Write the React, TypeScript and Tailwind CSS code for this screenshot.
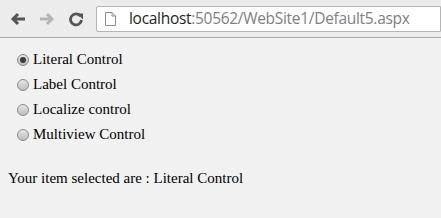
import React, { useState } from "react";

const items = ["Literal Control", "Label Control", "Localize control", "Multiview Control"];

function Radio({ checked }: { checked: boolean }) {
  return (
    <span className="w-[12px] h-[12px] rounded-full border border-[#8a8a8a] bg-gradient-to-b from-[#e6e6e6] to-[#bdbdbd] flex items-center justify-center shrink-0">
      {checked && <span className="w-[6px] h-[6px] rounded-full bg-[#3c3c3c]" />}
    </span>
  );
}

export default function App() {
  const [selected, setSelected] = useState(0);

  return (
    <div className="w-[441px] h-[218px] bg-[#f1f1f1] overflow-hidden">
      {/* browser toolbar */}
      <div className="h-[38px] bg-[#ececec] border-b border-[#a9a9a9] flex items-center pl-[9px] pt-[1px]">
        <svg width="18" height="16" viewBox="0 0 18 16" className="shrink-0">
          <path d="M16 8H4M9 3L4 8l5 5" stroke="#555" strokeWidth="3" fill="none" strokeLinejoin="miter" />
        </svg>
        <svg width="18" height="16" viewBox="0 0 18 16" className="shrink-0 ml-[11px]">
          <path d="M2 8h12M9 3l5 5-5 5" stroke="#b4b4b4" strokeWidth="3" fill="none" />
        </svg>
        <svg width="16" height="16" viewBox="0 0 16 16" className="shrink-0 ml-[12px]">
          <path d="M12.5 5.2A5.5 5.5 0 1 0 13.5 9" stroke="#555" strokeWidth="2.8" fill="none" />
          <path d="M9 2.5h6v6z" fill="#555" />
        </svg>
        <div className="ml-[12px] h-[26px] flex-1 bg-white border border-[#b5b5b5] rounded-l-[2px] flex items-center pl-[8px]">
          <svg width="11" height="14" viewBox="0 0 11 14" className="shrink-0">
            <path d="M0.5 0.5h6.5l3.5 3.5v9.5h-10z" fill="#fff" stroke="#8c8c8c" />
            <path d="M7 0.5v3.5h3.5" fill="none" stroke="#8c8c8c" />
          </svg>
          <span className="ml-[13px] text-[15.5px] leading-none tracking-[-0.3px] whitespace-nowrap" style={{ fontFamily: '"Open Sans", "Noto Sans", sans-serif' }}>
            <span className="text-[#1e1e1e]">localhost</span>
            <span className="text-[#808080]">:50562/WebSite1/Default5.aspx</span>
          </span>
        </div>
      </div>

      {/* page */}
      <div className="pl-[8px] pt-[9px] text-[15px] text-black" style={{ fontFamily: '"Liberation Serif", "Times New Roman", serif' }}>
        <div className="flex flex-col">
          {items.map((it, i) => (
            <label key={it} className="flex items-center h-[25px] pl-[9px] cursor-pointer" onClick={() => setSelected(i)}>
              <Radio checked={selected === i} />
              <span className="ml-[4px]">{it}</span>
            </label>
          ))}
        </div>
        <div className="mt-[20px]">Your item selected are : {items[selected]}</div>
      </div>
    </div>
  );
}
